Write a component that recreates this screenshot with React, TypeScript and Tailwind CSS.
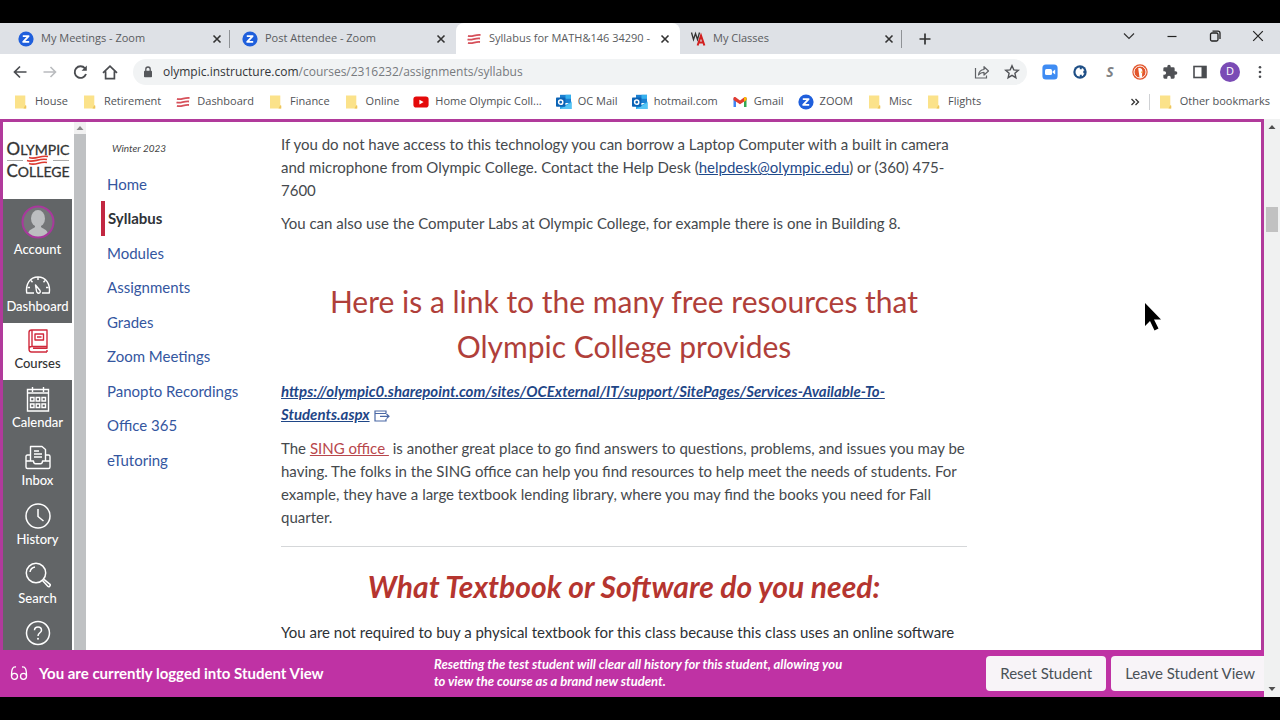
import type { ReactNode } from "react";
import clsx from "clsx";

type IconName = "zoom" | "waves" | "wa" | "folder" | "youtube" | "outlook" | "gmail";

type Tab = {
  title: string;
  icon: IconName;
  active?: boolean;
  divider?: boolean;
};

const tabs: Tab[] = [
  { title: "My Meetings - Zoom", icon: "zoom", divider: true },
  { title: "Post Attendee - Zoom", icon: "zoom" },
  { title: "Syllabus for MATH&146 34290 -", icon: "waves", active: true },
  { title: "My Classes", icon: "wa", divider: true }
];

const bookmarks: { label: string; icon: IconName }[] = [
  { label: "House", icon: "folder" },
  { label: "Retirement", icon: "folder" },
  { label: "Dashboard", icon: "waves" },
  { label: "Finance", icon: "folder" },
  { label: "Online", icon: "folder" },
  { label: "Home Olympic Coll...", icon: "youtube" },
  { label: "OC Mail", icon: "outlook" },
  { label: "hotmail.com", icon: "outlook" },
  { label: "Gmail", icon: "gmail" },
  { label: "ZOOM", icon: "zoom" },
  { label: "Misc", icon: "folder" },
  { label: "Flights", icon: "folder" }
];

const courseLinks = [
  "Home",
  "Syllabus",
  "Modules",
  "Assignments",
  "Grades",
  "Zoom Meetings",
  "Panopto Recordings",
  "Office 365",
  "eTutoring"
];

function SiteIcon({ name }: { name: IconName }) {
  switch (name) {
    case "zoom":
      return (
        <svg viewBox="0 0 16 16" className="size-4 shrink-0">
          <circle cx="8" cy="8" r="7.6" fill="#1f5fdc" />
          <path d="M4.8 5.1h5.8L5.2 10.9H11.2" fill="none" stroke="#fff" strokeWidth="1.9" strokeLinejoin="round" />
        </svg>
      );
    case "waves":
      return (
        <svg viewBox="0 0 16 16" className="size-4 shrink-0" fill="none" stroke="#d6505a" strokeWidth="1.8">
          <path d="M2 4.8c4 1.600 7-1.400 12.500-.8M1.500 8.300c4 1.600 7-1.400 12.500-.8M2 11.800c4 1.600 7-1.400 12-.8" />
        </svg>
      );
    case "wa":
      return (
        <svg viewBox="0 0 16 16" className="size-4 shrink-0" fill="none">
          <path d="M1.500 1.500l2 7 2-6 2 6 2-7" stroke="#333" strokeWidth="1.300" />
          <path d="M7.600 14.500L11 4.600l3.400 9.900M8.600 11.400h4.600" stroke="#d22020" strokeWidth="2" />
        </svg>
      );
    case "folder":
      return (
        <svg viewBox="0 0 16 16" className="size-4 shrink-0">
          <path d="M2 1.500h10.300v10h.9v3H2z" fill="#fbe28a" />
          <path d="M12.300 11.200l.9.500v2.800H10.500z" fill="#eec65c" />
        </svg>
      );
    case "youtube":
      return (
        <svg viewBox="0 0 16 16" className="size-4 shrink-0">
          <rect x=".4" y="2.600" width="15.200" height="11" rx="2.800" fill="#e40a0a" />
          <path d="M6.400 5.700l4.200 2.400-4.200 2.400z" fill="#fff" />
        </svg>
      );
    case "outlook":
      return (
        <svg viewBox="0 0 16 16" className="size-4 shrink-0">
          <path d="M4 .8h11V9H4z" fill="#1a7fd0" />
          <path d="M9.500.8H15v4H9.500z" fill="#35b0ee" />
          <path d="M4 8l5.500 3L15.500 7.400V15H4z" fill="#2aa5e6" />
          <path d="M4 15l11.500-6.400V15z" fill="#55c5f5" />
          <rect x="0" y="3.600" width="9.400" height="9.200" rx=".8" fill="#0b63b5" />
          <circle cx="4.700" cy="8.200" r="2.100" fill="none" stroke="#fff" strokeWidth="1.500" />
        </svg>
      );
    case "gmail":
      return (
        <svg viewBox="0 0 16 16" className="size-4 shrink-0">
          <path d="M1.500 4v9H4V6z" fill="#4285f4" />
          <path d="M14.500 4v9H12V6z" fill="#34a853" />
          <path d="M1.500 4.500C1.500 3 3 2.700 4 3.500l4 3 4-3c1-.8 2.500-.5 2.500 1V6L8 10.300 1.500 6z" fill="#e23b30" />
          <path d="M12 3.500c1-.8 2.500-.5 2.500 1V6L12 7.700z" fill="#fbbc04" />
        </svg>
      );
  }
}

function CloseIcon() {
  return (
    <svg viewBox="0 0 10 10" className="size-[10px]" stroke="#333" strokeWidth="1.600">
      <path d="M1.500 1.500l7 7M8.500 1.500l-7 7" />
    </svg>
  );
}

function TabStrip() {
  return (
    <div className="flex h-[31px] shrink-0 bg-[#dee1e6] pl-2">
      {tabs.map((tab) => (
        <div
          key={tab.title}
          className={clsx(
            "flex w-[224px] items-center gap-[7px] pr-[10px] pl-[10px]",
            tab.active && "rounded-t-lg bg-white"
          )}
        >
          <SiteIcon name={tab.icon} />
          <span className="flex-1 whitespace-nowrap text-[#5a5c60]">{tab.title}</span>
          <button aria-label={"Close " + tab.title}>
            <CloseIcon />
          </button>
          {tab.divider && <span className="-mr-2 h-[18px] w-px bg-[#8f9296]" />}
        </div>
      ))}
      <button aria-label="New tab" className="ml-[15px]">
        <svg viewBox="0 0 12 12" className="size-3" stroke="#333" strokeWidth="1.700">
          <path d="M6 .5v11M.5 6h11" />
        </svg>
      </button>
      <div className="ml-auto flex h-[26px] items-center gap-[31px] pr-4">
        <button aria-label="Search tabs">
          <svg viewBox="0 0 12 12" className="size-3" fill="none" stroke="#333" strokeWidth="1.200">
            <path d="M1 3.500l5 5 5-5" />
          </svg>
        </button>
        <button aria-label="Minimize">
          <svg viewBox="0 0 12 12" className="size-3" stroke="#222" strokeWidth="1.200">
            <path d="M1.500 6.500h9" />
          </svg>
        </button>
        <button aria-label="Restore">
          <svg viewBox="0 0 12 12" className="size-3" fill="none" stroke="#222" strokeWidth="1.300">
            <rect x="1.500" y="3" width="7.500" height="8" rx="1.500" />
            <path d="M3.500 1.200h5.500a2 2 0 0 1 2 2V9" />
          </svg>
        </button>
        <button aria-label="Close window">
          <svg viewBox="0 0 12 12" className="size-3" stroke="#222" strokeWidth="1.200">
            <path d="M1.200 1.200l9.600 9.600M10.800 1.200l-9.600 9.600" />
          </svg>
        </button>
      </div>
    </div>
  );
}

function ToolButton({ label, children }: { label: string; children: ReactNode }) {
  return (
    <button aria-label={label} className="flex w-[30px] justify-center">
      {children}
    </button>
  );
}

function Toolbar() {
  return (
    <div className="flex h-[35px] shrink-0 items-center bg-white px-[5px]">
      <ToolButton label="Back">
        <svg viewBox="0 0 16 16" className="size-4" fill="none" stroke="#4a4c50" strokeWidth="1.700">
          <path d="M14.500 8H2.500M8 2.500L2.500 8 8 13.500" />
        </svg>
      </ToolButton>
      <ToolButton label="Forward">
        <svg viewBox="0 0 16 16" className="size-4" fill="none" stroke="#b9bbbe" strokeWidth="1.600">
          <path d="M1.500 8h12M8.500 3l5 5-5 5" />
        </svg>
      </ToolButton>
      <ToolButton label="Reload">
        <svg viewBox="0 0 16 16" className="size-4" fill="none" stroke="#4a4c50" strokeWidth="1.900">
          <path d="M14 10A5.800 5.800 0 1 1 13 4.400" />
          <path d="M14.800 1.500v5.200H9.600z" fill="#4a4c50" stroke="none" />
        </svg>
      </ToolButton>
      <ToolButton label="Home page">
        <svg viewBox="0 0 16 16" className="size-4" fill="none" stroke="#4a4c50" strokeWidth="1.700">
          <path d="M1 8.900L8 2.100l7 6.800M3.600 7.300v7.300h8.800V7.300" />
        </svg>
      </ToolButton>
      <div className="ml-2 flex h-[26px] flex-1 items-center rounded-full bg-[#f1f3f4] pr-[7px] pl-[10px]">
        <svg viewBox="0 0 10 12" className="h-3 w-[10px]">
          <rect x="1" y="4.800" width="8" height="6.400" rx=".8" fill="#55575b" />
          <path d="M2.800 5V3.200a2.200 2.200 0 0 1 4.400 0V5" fill="none" stroke="#55575b" strokeWidth="1.300" />
        </svg>
        <span className="ml-[10px] flex-1 text-xs text-[#777a7e]">
          <span className="text-[#333538]">olympic.instructure.com</span>/courses/2316232/assignments/syllabus
        </span>
        <button aria-label="Share">
          <svg viewBox="0 0 16 16" className="size-4" fill="none" stroke="#606266" strokeWidth="1.200">
            <path d="M1.500 4v10h11v-2.500" />
            <path d="M4.500 11c.4-3.400 2.300-5.300 5.500-5.500V2.700L14.500 7 10 11V8.300c-2.400 0-4 .7-5.500 2.700z" strokeLinejoin="round" />
          </svg>
        </button>
        <button aria-label="Bookmark this tab" className="ml-[14px]">
          <svg viewBox="0 0 16 16" className="size-4" fill="none" stroke="#505256" strokeWidth="1.400">
            <path d="M8 1.800l1.800 4.100 4.500.4-3.400 3 1 4.400L8 11.400l-3.900 2.300 1-4.400-3.400-3 4.500-.4z" />
          </svg>
        </button>
      </div>
      <div className="ml-2 flex items-center">
        <ToolButton label="Zoom extension">
          <svg viewBox="0 0 16 16" className="size-4">
            <rect x=".4" y=".4" width="15.200" height="15.200" rx="3.500" fill="#3f8cf3" />
            <rect x="3" y="5" width="7" height="6" rx="1.500" fill="#fff" />
            <path d="M10.500 7.400l2.700-2v5.200l-2.700-2z" fill="#fff" />
          </svg>
        </ToolButton>
        <ToolButton label="Capture extension">
          <svg viewBox="0 0 16 16" className="size-4">
            <circle cx="8" cy="8" r="6.700" fill="#1f4f86" />
            <circle cx="8" cy="8" r="4.500" fill="#fff" />
            <path d="M7.800 3h2v2.300h-2zM7.800 10.700h2V13h-2zM11.300 6.700H14v2.600h-2.700z" fill="#1f4f86" />
          </svg>
        </ToolButton>
        <ToolButton label="Sidebar extension">
          <span className="text-sm font-bold text-[#808285] italic">S</span>
        </ToolButton>
        <ToolButton label="DuckDuckGo">
          <svg viewBox="0 0 16 16" className="size-4">
            <circle cx="8" cy="8" r="7.700" fill="#e2552b" />
            <circle cx="8" cy="8" r="6" fill="none" stroke="#fff" />
            <path d="M6.200 4.200c2.600-.8 4.500.6 4.200 3.200-.2 1.600-.6 4.400 0 5.800L7.600 14z" fill="#fff" />
            <path d="M9 7.500l2.600.5L9 9z" fill="#f6b23c" />
          </svg>
        </ToolButton>
        <ToolButton label="Extensions">
          <svg viewBox="0 0 24 24" className="size-4" fill="#4f5155">
            <path d="M20.500 11H19V7a2 2 0 0 0-2-2h-4V3.500a2.500 2.500 0 0 0-5 0V5H4a2 2 0 0 0-2 2v3.800h1.500a2.700 2.700 0 0 1 0 5.400H2V20a2 2 0 0 0 2 2h3.800v-1.500a2.700 2.700 0 0 1 5.400 0V22H17a2 2 0 0 0 2-2v-4h1.500a2.500 2.500 0 0 0 0-5z" />
          </svg>
        </ToolButton>
        <ToolButton label="Side panel">
          <svg viewBox="0 0 16 16" className="size-4">
            <rect x="2" y="2.500" width="12" height="11" fill="none" stroke="#4a4c50" strokeWidth="1.600" />
            <path d="M9.500 2.500H14v11H9.500z" fill="#4a4c50" />
          </svg>
        </ToolButton>
        <ToolButton label="Profile">
          <span className="flex size-5 items-center justify-center rounded-full bg-[#7a4bb5] text-[11px] text-white">D</span>
        </ToolButton>
        <ToolButton label="Browser menu">
          <svg viewBox="0 0 16 16" className="size-4" fill="#4a4c50">
            <circle cx="8" cy="3.200" r="1.300" />
            <circle cx="8" cy="8" r="1.300" />
            <circle cx="8" cy="12.800" r="1.300" />
          </svg>
        </ToolButton>
      </div>
    </div>
  );
}

function BookmarksBar() {
  return (
    <nav aria-label="Bookmarks" className="flex h-[30px] shrink-0 items-center bg-white pr-[10px] pb-[5px] pl-[13px] whitespace-nowrap text-[#505256]">
      <div className="flex items-center gap-[14px]">
        {bookmarks.map((item) => (
          <a key={item.label} href="#" className="flex items-center gap-[6px]">
            <SiteIcon name={item.icon} />
            {item.label}
          </a>
        ))}
      </div>
      <button aria-label="More bookmarks" className="ml-auto">
        <svg viewBox="0 0 10 10" className="size-[10px]" fill="none" stroke="#333" strokeWidth="1.300">
          <path d="M1.500 2l3 3-3 3M5.500 2l3 3-3 3" />
        </svg>
      </button>
      <span className="mr-2 ml-[9px] h-4 w-px bg-[#cfd1d4]" />
      <a href="#" className="flex items-center gap-[6px]">
        <SiteIcon name="folder" />
        Other bookmarks
      </a>
    </nav>
  );
}

function CollegeLogo() {
  return (
    <a href="#" aria-label="Olympic College" className="flex h-[77px] shrink-0 items-center justify-center bg-white">
      <svg viewBox="0 0 66 42" className="h-[42px] w-[66px]">
        <g fill="#333" stroke="#333" strokeWidth=".3" fontFamily="Lato, sans-serif" textAnchor="middle">
          <text x="33" y="15" fontSize="14">
            <tspan fontSize="17">O</tspan>LYMPIC
          </text>
          <text x="33" y="37" fontSize="14">
            <tspan fontSize="17">C</tspan>OLLEGE
          </text>
        </g>
        <path d="M2 20.500h16M48 20.500h16" stroke="#aaa" />
        <path d="M24 17.500c7 2.500 11-2.500 19-1M22 20.500c7 2.500 11-2.500 20-1M24 23.500c7 2.500 11-2.500 18-1" fill="none" stroke="#dc3a30" strokeWidth="1.700" />
      </svg>
    </a>
  );
}

function GlobalNavItem({ label, active, children }: { label: string; active?: boolean; children: ReactNode }) {
  return (
    <a
      href="#"
      className={clsx(
        "flex shrink-0 flex-col items-center gap-px pt-[6px] pb-2 text-[13px] leading-[18px] font-medium",
        active ? "bg-white text-[#333]" : "text-white"
      )}
    >
      {children}
      {label}
    </a>
  );
}

function GlobalNav() {
  return (
    <nav aria-label="Global navigation" className="flex w-[69px] shrink-0 flex-col overflow-hidden bg-[#626567]">
      <CollegeLogo />
      <GlobalNavItem label="Account">
        <svg viewBox="0 0 36 34" className="h-[34px] w-9">
          <circle cx="18" cy="17" r="15.500" fill="#747678" />
          <path d="M8 29c1-5 5-5 7-7V19h6v3c2 2 6 2 7 7-6 4.500-14 4.500-20 0z" fill="#bcbec0" />
          <ellipse cx="18" cy="13.500" rx="7" ry="8.500" fill="#bcbec0" />
          <circle cx="18" cy="17" r="15.500" fill="none" stroke="#a8389c" strokeWidth="2" />
        </svg>
      </GlobalNavItem>
      <GlobalNavItem label="Dashboard">
        <svg viewBox="0 0 26 24" className="h-6 w-[26px]" fill="none" stroke="#fff" strokeWidth="1.400" strokeLinejoin="round">
          <path d="M9 21H1.700C.5 12 5 5 13 5s12.500 7 11.300 16H17" />
          <path d="M10.500 13l4.500 5.500c1 2-.8 3.200-2.200 2.500-1.200-.6-1.300-1.400-1.400-2.500zM13 5v3M6 8.500l1.500 1.800M20 8.500l-1.500 1.800M2.500 15.500H5M21 15.500h2.500" />
        </svg>
      </GlobalNavItem>
      <GlobalNavItem label="Courses" active>
        <svg viewBox="0 0 26 24" className="h-6 w-[26px]" fill="none" stroke="#d02a3c" strokeWidth="1.400" strokeLinejoin="round">
          <path d="M22 17.500V1H6.500C5 1 4 2 4 3.500V20c0 1.800 1 3 2.500 3H22M4 20c0-1.500 1-2.500 2.500-2.500H22v1.700H8M22 21v2M7 1v16.500" />
          <path d="M10 5h8.500v6H10zM12 8h4.500" />
        </svg>
      </GlobalNavItem>
      <GlobalNavItem label="Calendar">
        <svg viewBox="0 0 26 26" className="size-[26px]" fill="none" stroke="#fff" strokeWidth="1.400">
          <path d="M2.500 3.500h21V25h-21zM2.500 7h21M7.500 1v5M18.500 1v5" />
          <path d="M5.500 11.500h3.500V15H5.500zM11.200 11.500h3.500V15h-3.500zM17 11.500h3.500V15H17zM5.500 18h3.500v3.500H5.500zM11.200 18h3.500v3.500h-3.500zM17 18h3.500v3.500H17z" />
        </svg>
      </GlobalNavItem>
      <GlobalNavItem label="Inbox">
        <svg viewBox="0 0 26 25" className="h-[25px] w-[26px]" fill="none" stroke="#fff" strokeWidth="1.400" strokeLinejoin="round">
          <path d="M5.500 16V1.500H17l3.500 3V16M5.500 10H2.500c-1 0-1.500.7-1.500 1.500V22c0 1 .6 1.500 1.500 1.500h21c1 0 1.500-.6 1.500-1.500V11.500c0-.9-.6-1.500-1.500-1.500h-3M1 16h7.500c0 1.700.8 2.700 2 2.700h5c1.200 0 2-1 2-2.700H25" />
          <path d="M9 6h5M9 9h8M9 12h8" />
        </svg>
      </GlobalNavItem>
      <GlobalNavItem label="History">
        <svg viewBox="0 0 26 26" className="size-[26px]" fill="none" stroke="#fff" strokeWidth="1.500">
          <circle cx="13" cy="13" r="12" />
          <path d="M13 6v7.500l5.500 4.500" />
        </svg>
      </GlobalNavItem>
      <GlobalNavItem label="Search">
        <svg viewBox="0 0 26 26" className="size-[26px]" fill="none" stroke="#fff" strokeWidth="1.500" strokeLinejoin="round">
          <circle cx="11" cy="11" r="9.700" />
          <path d="M5 10a6 6 0 0 1 5-5M17.500 18.500l5.500 6c1 .8 3-1 2-2.200l-6-5" />
        </svg>
      </GlobalNavItem>
      <a href="#" aria-label="Help" className="flex shrink-0 justify-center pt-[5px]">
        <svg viewBox="0 0 26 26" className="size-[26px]" fill="none" stroke="#fff" strokeWidth="1.500">
          <circle cx="13" cy="13" r="11.500" />
          <path d="M9.500 10.200c0-4.400 7-4.400 7 0 0 2.600-3.500 2.600-3.500 5.800" />
          <circle cx="13" cy="18.800" r="1" fill="#fff" stroke="none" />
        </svg>
      </a>
    </nav>
  );
}

function ScrollArrow({ down, className }: { down?: boolean; className?: string }) {
  return (
    <svg viewBox="0 0 8 8" className={clsx("size-2", className)} fill="currentColor">
      <path d={down ? "M.5 2h7L4 6z" : "M.5 6h7L4 2z"} />
    </svg>
  );
}

function CourseNav() {
  return (
    <nav aria-label="Course" className="w-[195px] shrink-0 pl-[15px]">
      <p className="mt-[17px] pl-[11px] text-[10px] leading-[18px] text-[#444] italic">Winter 2023</p>
      <ul className="mt-[10px] grid h-[310px] auto-rows-fr text-[15px] text-[#34569f]">
        {courseLinks.map((label) => (
          <li key={label} className="grid">
            <a
              href="#"
              className={clsx(
                "flex items-center",
                label === "Syllabus" ? "border-l-4 border-[#c22741] pl-[3px] font-bold text-[#2f3338]" : "pl-[6px]"
              )}
            >
              {label}
            </a>
          </li>
        ))}
      </ul>
    </nav>
  );
}

function SyllabusBody() {
  return (
    <main className="w-[686px] text-[15px] leading-[23px] text-[#45494d]">
      <p className="mt-[11px]">
        If you do not have access to this technology you can borrow a Laptop Computer with a built in camera and
        microphone from Olympic College. Contact the Help Desk (
        <a href="#" className="text-[#1f4a8a] underline">helpdesk@olympic.edu</a>) or (360) 475-7600
      </p>
      <p className="mt-[10px]">
        You can also use the Computer Labs at Olympic College, for example there is one in Building 8.
      </p>
      <h2 className="mt-11 px-10 text-center text-[30px] leading-[45px] text-[#b03f3a]">
        Here is a link to the many free resources that Olympic College provides
      </h2>
      <p className="mt-[11px] font-bold text-[#1f4687] italic">
        <a href="#" className="underline">
          https://olympic0.sharepoint.com/sites/OCExternal/IT/support/SitePages/Services-Available-To-Students.aspx
        </a>
        <svg viewBox="0 0 16 12" className="ml-1 inline h-3 w-4" fill="none" stroke="#4a68a5" strokeWidth="1.200">
          <path d="M12 3.500V1H1v10h11V9M1 3.500h11M6 6.300h9M12.500 4l2.500 2.300-2.500 2.300" />
        </svg>
      </p>
      <p className="mt-[11px]">
        The <a href="#" className="text-[#b8474c] underline">SING office&nbsp;</a> is another great place to go find
        answers to questions, problems, and issues you may be having. The folks in the SING office can help you find
        resources to help meet the needs of students. For example, they have a large textbook lending library, where
        you may find the books you need for Fall quarter.
      </p>
      <hr className="mt-[17px] border-[#d5d7d9]" />
      <h2 className="mt-[17px] text-center text-[30px] leading-[45px] font-bold text-[#b5352f] italic">
        What Textbook or Software do you need:
      </h2>
      <p className="mt-3 text-[#2d3135]">
        You are not required to buy a physical textbook for this class because this class uses an online software
        program called WebAssign.
      </p>
    </main>
  );
}

function StudentViewBar() {
  return (
    <footer className="flex h-[47px] shrink-0 items-center overflow-hidden bg-[#bf32a4] pb-px pl-[10px] text-white">
      <svg viewBox="0 0 18 16" className="h-4 w-[18px]" fill="none" stroke="#fff" strokeWidth="1.300">
        <path d="M6 2C2.500 1.500 1.500 4 1.500 11" />
        <circle cx="4.500" cy="11.300" r="3" />
        <circle cx="13.500" cy="11.300" r="3" />
        <path d="M12 2c3.500-.5 4.500 2 4.500 9" />
      </svg>
      <strong className="ml-[11px] w-[395px] text-[15px] leading-5">You are currently logged into Student View</strong>
      <p className="w-[420px] text-[13px] leading-[17px] font-bold italic">
        Resetting the test student will clear all history for this student, allowing you to view the course as a brand
        new student.
      </p>
      <div className="ml-auto flex shrink-0 gap-[5px] text-[15px] text-[#4a5157]">
        <button className="h-[35px] rounded-sm bg-[#f8f4f8] px-[14px]">Reset Student</button>
        <button className="h-[35px] rounded-l-sm bg-[#f8f4f8] pr-[9px] pl-[14px]">Leave Student View</button>
      </div>
    </footer>
  );
}

export default function App() {
  return (
    <div className="flex h-screen flex-col overflow-hidden bg-black py-[23px] font-['Open_Sans',sans-serif] text-[11px]">
      <TabStrip />
      <Toolbar />
      <BookmarksBar />
      <div className="flex min-h-0 flex-1 bg-white font-[Lato,sans-serif]">
        <div className="flex min-w-0 flex-1 flex-col">
          <div className="flex min-h-0 flex-1 overflow-hidden border-3 border-b-0 border-[#b13a9b]">
            <GlobalNav />
            <div className="ml-[2px] flex w-3 shrink-0 flex-col items-center bg-[#f1f1f1]">
              <ScrollArrow className="my-[2px] shrink-0 text-[#8a8a8a]" />
              <span className="w-full flex-1 bg-[#bfc1c3]" />
            </div>
            <CourseNav />
            <SyllabusBody />
          </div>
          <StudentViewBar />
        </div>
        <div className="flex w-4 shrink-0 flex-col items-center bg-[#f0f1f1] text-[#505050]">
          <ScrollArrow className="mt-1" />
          <span className="mt-[76px] h-[25px] w-3 bg-[#c1c1c1]" />
          <ScrollArrow down className="mt-auto mb-1" />
        </div>
      </div>
      <svg viewBox="0 0 18 30" className="absolute top-[302px] left-[1144px] h-[30px] w-[18px]">
        <path d="M1 1v23l5-5 4.500 9.500 4-2-4.500-9H17z" fill="#000" />
      </svg>
    </div>
  );
}
